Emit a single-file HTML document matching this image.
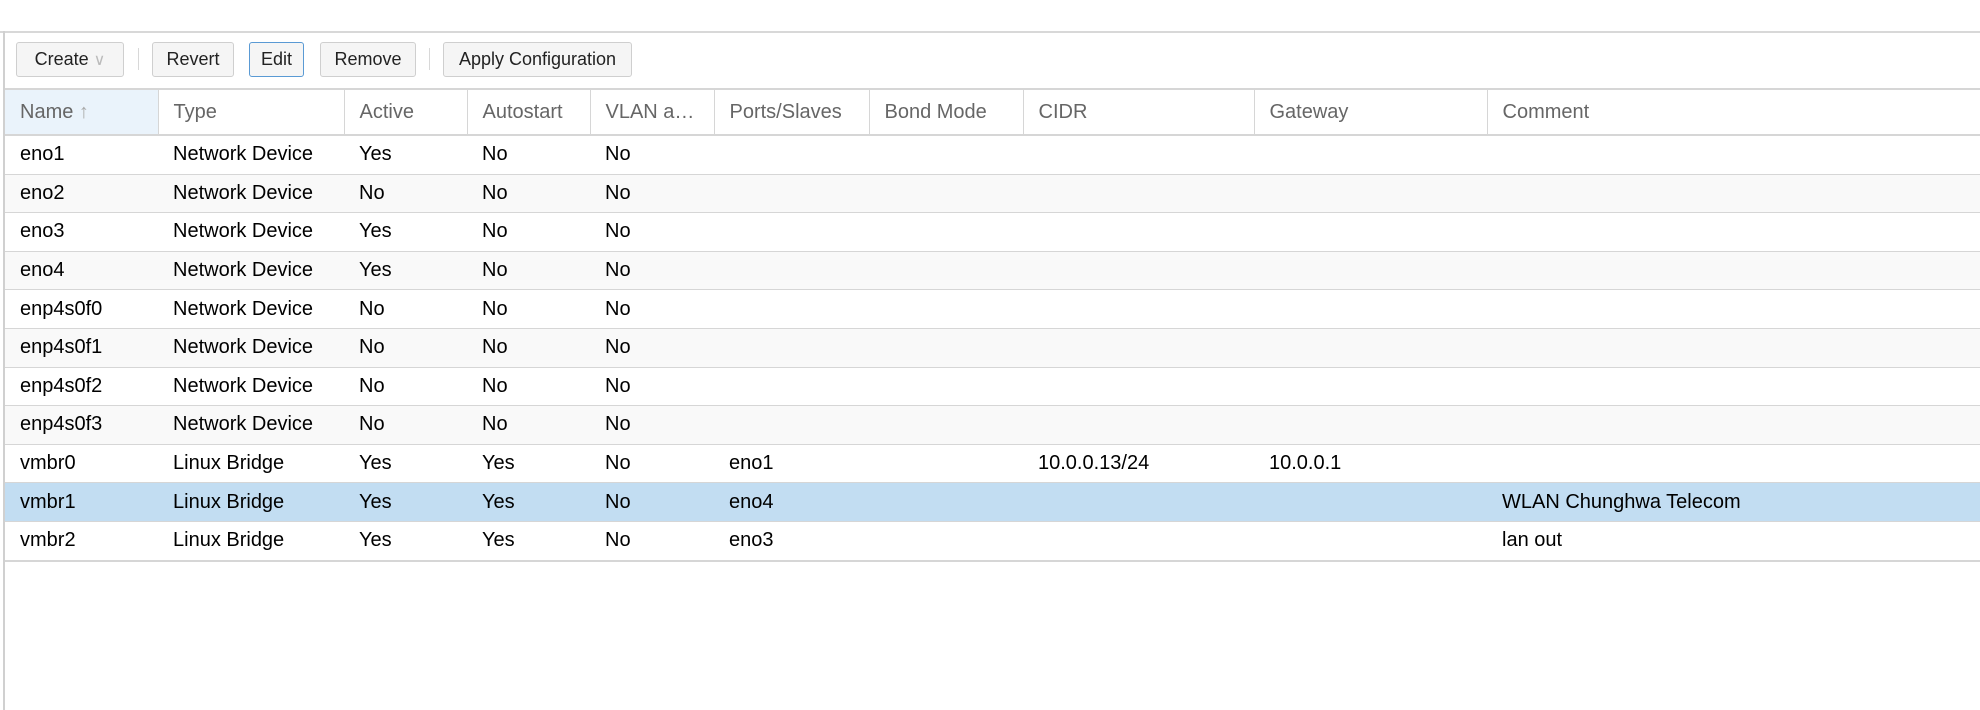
<!DOCTYPE html>
<html><head><style>
body{margin:0;width:1980px;height:710px;background:#fff;font-family:"Liberation Sans",Arial,sans-serif;position:relative;overflow:hidden;color:#000}
.top{position:absolute;left:0;top:31px;width:1980px;height:2px;background:#d8d8d8}
.lb{position:absolute;left:3px;top:31px;width:2px;height:679px;background:#d0d0d0}
.btn{position:absolute;top:42px;height:33px;border:1px solid #cfcfcf;border-radius:3px;background:#f5f5f5;font-size:18px;line-height:33px;text-align:center;color:#222;box-sizing:content-box}
.sep{position:absolute;top:48px;width:1px;height:22px;background:#d8d8d8}
table{position:absolute;left:5px;top:88px;border-collapse:collapse;table-layout:fixed;width:1975px}
td,th{height:37.6px;padding:0 0 0 15px;font-size:20px;text-align:left;white-space:nowrap;overflow:hidden;border-bottom:1px solid #d6d6d6}
th{height:44px;font-weight:normal;color:#666;border-left:1px solid #d6d6d6;border-top:2px solid #d6d6d6;border-bottom:2px solid #d6d6d6}
th:first-child{border-left:none;background:#eaf3fb}
tr.a td{background:#f9f9f9}
tr.s td{background:#c2ddf2}
tr.l td{border-bottom:2px solid #d6d6d6}
</style></head><body>
<div class="top"></div><div class="lb"></div>
<div class="btn" style="left:16px;width:106px">Create <span style="color:#bbb;font-size:16px">&#8744;</span></div>
<div class="sep" style="left:138px"></div>
<div class="btn" style="left:152px;width:80px">Revert</div>
<div class="btn" style="left:249px;width:53px;border-color:#5a9ad4">Edit</div>
<div class="btn" style="left:320px;width:94px">Remove</div>
<div class="sep" style="left:429px"></div>
<div class="btn" style="left:443px;width:187px">Apply Configuration</div>
<table>
<colgroup><col style="width:153px"><col style="width:186px"><col style="width:123px"><col style="width:123px"><col style="width:124px"><col style="width:155px"><col style="width:154px"><col style="width:231px"><col style="width:233px"><col></colgroup>
<tr><th>Name <span style="color:#aaa">&#8593;</span></th><th>Type</th><th>Active</th><th>Autostart</th><th>VLAN a…</th><th>Ports/Slaves</th><th>Bond Mode</th><th>CIDR</th><th>Gateway</th><th>Comment</th></tr>
<tr><td>eno1</td><td>Network Device</td><td>Yes</td><td>No</td><td>No</td><td></td><td></td><td></td><td></td><td></td></tr>
<tr class="a"><td>eno2</td><td>Network Device</td><td>No</td><td>No</td><td>No</td><td></td><td></td><td></td><td></td><td></td></tr>
<tr><td>eno3</td><td>Network Device</td><td>Yes</td><td>No</td><td>No</td><td></td><td></td><td></td><td></td><td></td></tr>
<tr class="a"><td>eno4</td><td>Network Device</td><td>Yes</td><td>No</td><td>No</td><td></td><td></td><td></td><td></td><td></td></tr>
<tr><td>enp4s0f0</td><td>Network Device</td><td>No</td><td>No</td><td>No</td><td></td><td></td><td></td><td></td><td></td></tr>
<tr class="a"><td>enp4s0f1</td><td>Network Device</td><td>No</td><td>No</td><td>No</td><td></td><td></td><td></td><td></td><td></td></tr>
<tr><td>enp4s0f2</td><td>Network Device</td><td>No</td><td>No</td><td>No</td><td></td><td></td><td></td><td></td><td></td></tr>
<tr class="a"><td>enp4s0f3</td><td>Network Device</td><td>No</td><td>No</td><td>No</td><td></td><td></td><td></td><td></td><td></td></tr>
<tr><td>vmbr0</td><td>Linux Bridge</td><td>Yes</td><td>Yes</td><td>No</td><td>eno1</td><td></td><td>10.0.0.13/24</td><td>10.0.0.1</td><td></td></tr>
<tr class="s"><td>vmbr1</td><td>Linux Bridge</td><td>Yes</td><td>Yes</td><td>No</td><td>eno4</td><td></td><td></td><td></td><td>WLAN Chunghwa Telecom</td></tr>
<tr class="l"><td>vmbr2</td><td>Linux Bridge</td><td>Yes</td><td>Yes</td><td>No</td><td>eno3</td><td></td><td></td><td></td><td>lan out</td></tr>
</table>
</body></html>
